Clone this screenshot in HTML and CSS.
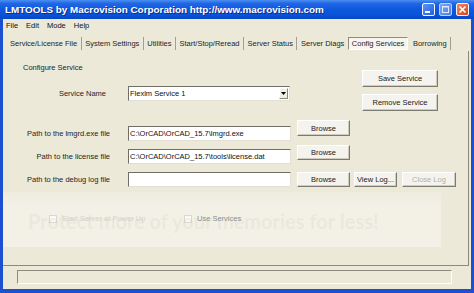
FILE: index.html
```html
<!DOCTYPE html>
<html>
<head>
<meta charset="utf-8">
<title>LMTOOLS</title>
<link rel="stylesheet" href="styles.css">
</head>
<body>
<div class="window">
  <div class="titlebar">
    <span class="title">LMTOOLS by Macrovision Corporation http://www.macrovision.com</span>
    <div class="caption-btns">
      <span class="cbtn min"><svg width="11" height="11" viewBox="0 0 11 11"><rect x="2" y="7" width="5" height="2" fill="#fff"/></svg></span>
      <span class="cbtn max"><svg width="11" height="11" viewBox="0 0 11 11"><rect x="2.5" y="2.5" width="6" height="6" fill="none" stroke="#dfe8fb" stroke-width="1"/><rect x="2" y="2" width="7" height="1.5" fill="#dfe8fb"/></svg></span>
      <span class="cbtn close"><svg width="11" height="11" viewBox="0 0 11 11"><path d="M2.5 2.5 L8.5 8.5 M8.5 2.5 L2.5 8.5" stroke="#fff" stroke-width="1.6"/></svg></span>
    </div>
  </div>
  <div class="frame">
    <div class="menubar">
      <span>File</span><span>Edit</span><span>Mode</span><span>Help</span>
    </div>
    <div class="tabs">
      <span class="tab">Service/License File</span>
      <span class="tab">System Settings</span>
      <span class="tab">Utilities</span>
      <span class="tab">Start/Stop/Reread</span>
      <span class="tab">Server Status</span>
      <span class="tab pre-active">Server Diags</span>
      <span class="tab active">Config Services</span>
      <span class="tab">Borrowing</span>
    </div>
    <div class="panel">
      <div class="top">
        <div class="left">
          <div class="heading">Configure Service</div>
          <div class="field svc">
            <span class="lbl">Service Name</span>
            <div class="combo"><span class="combo-text">Flexlm Service 1</span><span class="drop"><svg width="5" height="3" viewBox="0 0 5 3"><path d="M0 0 H5 L2.5 3 Z" fill="#000"/></svg></span></div>
          </div>
        </div>
        <div class="side">
          <span class="btn wide">Save Service</span>
          <span class="btn wide">Remove Service</span>
        </div>
      </div>
      <div class="prow r1">
        <div class="field">
          <span class="lbl">Path to the lmgrd.exe file</span>
          <div class="input">C:\OrCAD\OrCAD_15.7\lmgrd.exe</div>
        </div>
        <span class="btn browse">Browse</span>
      </div>
      <div class="prow r2">
        <div class="field">
          <span class="lbl">Path to the license file</span>
          <div class="input">C:\OrCAD\OrCAD_15.7\tools\license.dat</div>
        </div>
        <span class="btn browse">Browse</span>
      </div>
      <div class="prow r3">
        <div class="field">
          <span class="lbl">Path to the debug log file</span>
          <div class="input"></div>
        </div>
        <span class="btn browse">Browse</span>
        <span class="btn viewlog">View Log...</span>
        <span class="btn closelog disabled">Close Log</span>
      </div>
      <div class="checks">
        <div class="check c1"><span class="box"></span><span class="ctext disabled">Start Server at Power Up</span></div>
        <div class="check c2"><span class="box"></span><span class="ctext">Use Services</span></div>
      </div>
      <div class="wm-band"><span class="wm-text">Protect more of your memories for less!</span></div>
    </div>
    <div class="statusbar"><div class="status"></div></div>
  </div>
</div>
</body>
</html>
```
FILE: styles.css
```css
* { box-sizing: border-box; }
html, body { margin: 0; padding: 0; }
body {
  width: 474px;
  height: 293px;
  overflow: hidden;
  font-family: "Liberation Sans", Arial, sans-serif;
  font-size: 7.5px;
  color: #1e1e1e;
  background: #ece9d8;
}
.window {
  width: 474px;
  height: 293px;
  display: flex;
  flex-direction: column;
}
.titlebar {
  height: 19px;
  flex: none;
  display: flex;
  align-items: center;
  padding-left: 5px;
  background: linear-gradient(to bottom, #4a90f0 0%, #2166e6 18%, #0d58de 50%, #0a52d6 80%, #0846c4 100%);
}
.title {
  color: #fff;
  font-weight: bold;
  font-size: 9.9px;
  white-space: nowrap;
  text-shadow: 1px 1px 0 #0c2c8c;
}
.caption-btns {
  margin-left: auto;
  padding-right: 5px;
  display: flex;
  gap: 4px;
}
.cbtn {
  width: 13px;
  height: 13px;
  border: 1px solid #f2f6ff;
  border-radius: 2px;
  display: flex;
  align-items: center;
  justify-content: center;
}
.cbtn.min { background: linear-gradient(135deg, #5d95f5, #1f5ee0); }
.cbtn.max { background: linear-gradient(135deg, #7aa8f5, #4a80ea); border-color: #b9cff7; }
.cbtn.close { background: linear-gradient(135deg, #f08a60, #d6431c); }

.frame {
  flex: 1;
  display: flex;
  flex-direction: column;
  border: 3px solid #1c50d0;
  border-top: 0;
  border-bottom-width: 4px;
  background: #ece9d8;
}
.menubar {
  height: 13px;
  flex: none;
  display: flex;
  align-items: center;
  gap: 8px;
  padding-left: 3px;
  color: #111;
}
.tabs {
  height: 19px;
  flex: none;
  display: flex;
  padding: 5px 0 1px 3px;
}
.tab {
  padding: 0 3.5px;
  line-height: 13px;
  border-right: 1px solid #a29f90;
  white-space: nowrap;
}
.tab:first-child { padding-left: 4px; }
.tab.pre-active { border-right: 0; }
.tab.active {
  padding: 0 3px;
  line-height: 11px;
  border: 1px solid;
  border-color: #8e8c80 #fff #fff #8e8c80;
  background: #f6f5f0;
  margin-right: 1px;
}

.panel {
  position: relative;
  flex: none;
  height: 215px;
  margin-right: 2px;
  border-right: 1px solid #8c8a7f;
  border-bottom: 1px solid #8c8a7f;
  display: flex;
  flex-direction: column;
}
.top {
  display: flex;
  height: 60px;
  flex: none;
}
.left { width: 288px; }
.heading {
  margin: 12px 0 0 20px;
  line-height: 10px;
}
.field {
  display: flex;
  align-items: center;
}
.svc { margin-top: 13px; }
.lbl {
  width: 107px;
  text-align: right;
  white-space: nowrap;
}
.svc .lbl { padding-right: 4px; }
.combo, .input {
  margin-left: 18px;
  width: 162px;
  height: 15px;
  background: #fff;
  border: 1px solid;
  border-color: #6f6e67 #e2e0d5 #e2e0d5 #6f6e67;
  display: flex;
  align-items: center;
  padding-left: 1px;
  white-space: nowrap;
  overflow: hidden;
  color: #111;
}
.input { width: 163px; }
.combo-text { flex: 1; }
.drop {
  width: 9px;
  height: 11px;
  margin-right: 1px;
  background: #f1efe6;
  border: 1px solid;
  border-color: #fff #8a887c #8a887c #fff;
  display: flex;
  align-items: center;
  justify-content: center;
}
.side {
  margin: 19px 0 0 71px;
  display: flex;
  flex-direction: column;
  gap: 7px;
}
.btn {
  display: flex;
  align-items: center;
  justify-content: center;
  height: 16px;
  background: #f4f3ee;
  border: 1px solid;
  border-color: #fff #7d7b70 #7d7b70 #fff;
  box-shadow: inset -1px -1px 0 #cfccbf;
  white-space: nowrap;
  color: #1a1a1a;
}
.btn.wide { width: 76px; height: 17px; }
.btn.disabled { color: #b3b0a2; }
.prow {
  display: flex;
  align-items: flex-start;
}
.r1 { margin-top: 9px; }
.r1 .field { margin-top: 6px; }
.r2 { margin-top: 4px; }
.r2 .field { margin-top: 4px; }
.r2 .btn { height: 15px; }
.r3 { margin-top: 8px; }
.r3 .btn { height: 15px; }
.browse { margin-left: 6px; width: 53px; }
.viewlog { margin-left: 4px; width: 43px; }
.closelog { margin-left: 5px; width: 54px; }

.checks {
  display: flex;
  margin-top: 27px;
  padding-left: 46px;
}
.check {
  display: flex;
  align-items: center;
  gap: 5px;
}
.check.c1 { width: 135px; }
.box {
  width: 8px;
  height: 8px;
  border: 1px solid #c4c1b4;
  background: #f7f6f1;
}
.ctext { color: #3a3a3a; }
.ctext.disabled { color: #b9b6a8; }

.wm-band {
  position: absolute;
  left: 0;
  top: 141px;
  width: 438px;
  height: 55px;
  background: linear-gradient(to bottom, rgba(255,255,255,0.15), rgba(255,255,255,0.38) 25%, rgba(255,255,255,0.38));
}
.wm-text {
  position: absolute;
  left: 25px;
  top: 17px;
  font-family: Lato, "Open Sans", sans-serif;
  font-weight: bold;
  font-size: 20px;
  color: rgba(200, 196, 180, 0.2);
  white-space: nowrap;
}

.statusbar {
  flex: 1;
  padding: 4px 0 0 14px;
}
.status {
  width: 435px;
  height: 14px;
  border: 1px solid;
  border-color: #8e8c80 #fff #fff #8e8c80;
}
```
